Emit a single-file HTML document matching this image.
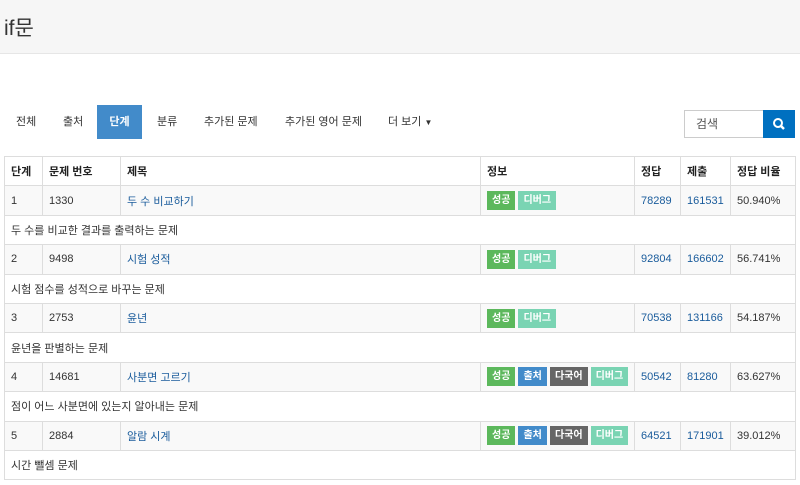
<!DOCTYPE html>
<html><head><meta charset="utf-8"><style>
*{box-sizing:border-box}
body{margin:0;width:800px;height:485px;overflow:hidden;background:#fff;font-family:"Liberation Sans","Noto Sans CJK KR",sans-serif;font-size:11px;color:#333}
.hd{position:absolute;left:0;top:0;width:800px;height:54px;background:#f6f6f6;border-bottom:1px solid #e6e6e6}
.hd h1{position:absolute;left:4px;top:12px;margin:0;font-weight:normal;font-size:21px;color:#333}
.tab{position:absolute;top:105px;height:34px;line-height:34px;font-size:11px;color:#333}
.act{background:#428bca;color:#fff;left:97px;width:45px;text-align:center;font-weight:bold}
.srch{position:absolute;left:684px;top:110px;width:80px;height:28px;border:1px solid #ccc;padding-left:11px;line-height:26px;color:#555;font-size:12px}
.btn{position:absolute;left:763px;top:110px;width:32px;height:28px;background:#0070c0}
table{position:absolute;left:4px;top:156px;width:791px;border-collapse:collapse;table-layout:fixed}
td,th{border:1px solid #ddd;padding:0 6px;height:29.4px;text-align:left;white-space:nowrap;font-size:11px;vertical-align:middle}
th{font-weight:bold;color:#222}
tr.g td{background:#f9f9f9}
a{color:#1a5c9c;text-decoration:none}
.l{display:inline-block;vertical-align:middle;padding:0 5px;height:19px;line-height:19px;color:#fff;font-size:10px;font-weight:bold}
.s{background:#5cb85c}.d{background:#7ad4b3}.c{background:#428bca}.m{background:#666}
</style></head><body>
<div class="hd"><h1>if문</h1></div>
<div class="tab" style="left:16px">전체</div>
<div class="tab" style="left:63px">출처</div>
<div class="tab act">단계</div>
<div class="tab" style="left:157px">분류</div>
<div class="tab" style="left:204px">추가된 문제</div>
<div class="tab" style="left:285px">추가된 영어 문제</div>
<div class="tab" style="left:388px">더 보기 <span style="font-size:8px">▼</span></div>
<div class="srch">검색</div>
<div class="btn"><svg width="32" height="28"><circle cx="15" cy="13" r="4" stroke="#fff" stroke-width="2" fill="none"/><line x1="18" y1="16" x2="21" y2="19" stroke="#fff" stroke-width="2.5"/></svg></div>
<table>
<colgroup><col style="width:38px"><col style="width:78px"><col style="width:360px"><col style="width:154px"><col style="width:46px"><col style="width:50px"><col style="width:65px"></colgroup>
<tr><th>단계</th><th>문제 번호</th><th>제목</th><th>정보</th><th>정답</th><th>제출</th><th>정답 비율</th></tr>
<tr class="g"><td>1</td><td>1330</td><td><a>두 수 비교하기</a></td><td><span class="l s">성공</span> <span class="l d">디버그</span></td><td><a>78289</a></td><td><a>161531</a></td><td>50.940%</td></tr>
<tr><td colspan="7">두 수를 비교한 결과를 출력하는 문제</td></tr>
<tr class="g"><td>2</td><td>9498</td><td><a>시험 성적</a></td><td><span class="l s">성공</span> <span class="l d">디버그</span></td><td><a>92804</a></td><td><a>166602</a></td><td>56.741%</td></tr>
<tr><td colspan="7">시험 점수를 성적으로 바꾸는 문제</td></tr>
<tr class="g"><td>3</td><td>2753</td><td><a>윤년</a></td><td><span class="l s">성공</span> <span class="l d">디버그</span></td><td><a>70538</a></td><td><a>131166</a></td><td>54.187%</td></tr>
<tr><td colspan="7">윤년을 판별하는 문제</td></tr>
<tr class="g"><td>4</td><td>14681</td><td><a>사분면 고르기</a></td><td><span class="l s">성공</span> <span class="l c">출처</span> <span class="l m">다국어</span> <span class="l d">디버그</span></td><td><a>50542</a></td><td><a>81280</a></td><td>63.627%</td></tr>
<tr><td colspan="7">점이 어느 사분면에 있는지 알아내는 문제</td></tr>
<tr class="g"><td>5</td><td>2884</td><td><a>알람 시계</a></td><td><span class="l s">성공</span> <span class="l c">출처</span> <span class="l m">다국어</span> <span class="l d">디버그</span></td><td><a>64521</a></td><td><a>171901</a></td><td>39.012%</td></tr>
<tr><td colspan="7">시간 뺄셈 문제</td></tr>
</table>
</body></html>
